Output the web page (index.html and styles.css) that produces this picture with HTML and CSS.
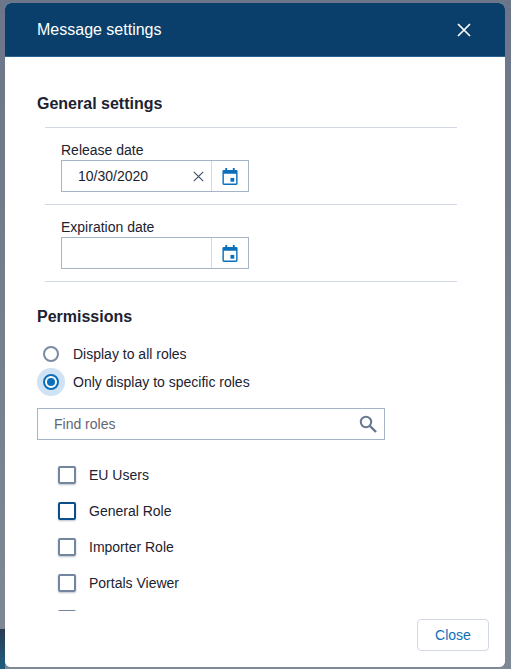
FILE: index.html
```html
<!DOCTYPE html>
<html>

<head>
<title>Message settings</title>
<meta charset="UTF-8">

<link rel="stylesheet" href="styles.css">
</head>

<body>

	<div id="modal">
		<header id="modal-head">
			<h1>Message settings</h1>
			<button class="head-close" aria-label="Close">
				<svg width="14" height="14" viewBox="0 0 14 14"><path d="M1 1L13 13M13 1L1 13" stroke="#fff" stroke-width="1.7" fill="none"/></svg>
			</button>
		</header>

		<div id="modal-body">
			<h2>General settings</h2>
			<div class="fields">
				<div class="field">
					<label>Release date</label>
					<div class="date-input">
						<span class="date-value">10/30/2020</span>
						<svg class="clear" width="11" height="11" viewBox="0 0 11 11"><path d="M.8.8L10.2 10.2M10.2.8L.8 10.2" stroke="#44546a" stroke-width="1.2" fill="none"/></svg>
						<span class="date-btn">
							<svg width="16" height="17" viewBox="0 0 16 18"><path fill="#0b6fbc" d="M3 0h2v2h6V0h2v2h1.500A1.500 1.500 0 0 1 16 3.500v13a1.500 1.500 0 0 1-1.500 1.500h-13A1.500 1.500 0 0 1 0 16.500v-13A1.500 1.500 0 0 1 1.500 2H3zM1.500 6v10.500h13V6z"/><rect x="8.500" y="10.500" width="4" height="4" fill="#0b6fbc"/></svg>
						</span>
					</div>
				</div>
				<div class="field">
					<label>Expiration date</label>
					<div class="date-input">
						<span class="date-value"></span>
						<span class="date-btn">
							<svg width="16" height="17" viewBox="0 0 16 18"><path fill="#0b6fbc" d="M3 0h2v2h6V0h2v2h1.500A1.500 1.500 0 0 1 16 3.500v13a1.500 1.500 0 0 1-1.500 1.500h-13A1.500 1.500 0 0 1 0 16.500v-13A1.500 1.500 0 0 1 1.500 2H3zM1.500 6v10.500h13V6z"/><rect x="8.500" y="10.500" width="4" height="4" fill="#0b6fbc"/></svg>
						</span>
					</div>
				</div>
			</div>

			<h2 class="perm-title">Permissions</h2>
			<div class="radios">
				<div class="radio-row"><span class="radio"></span>Display to all roles</div>
				<div class="radio-row"><span class="radio on"></span>Only display to specific roles</div>
			</div>

			<div class="search">
				<span>Find roles</span>
				<svg width="18" height="18" viewBox="0 0 18 18"><circle cx="7" cy="7" r="5.200" stroke="#68778f" stroke-width="2" fill="none"/><path d="M11 11L17 17" stroke="#68778f" stroke-width="2.400" fill="none"/></svg>
			</div>

			<ul class="roles">
				<li><span class="check"></span>EU Users</li>
				<li><span class="check focus"></span>General Role</li>
				<li><span class="check"></span>Importer Role</li>
				<li><span class="check"></span>Portals Viewer</li>
				<li><span class="check"></span></li>
			</ul>
		</div>

		<footer id="modal-foot">
			<button class="close-btn">Close</button>
		</footer>
	</div>

</body>
</html>
```
FILE: styles.css
```css
* {
	box-sizing: border-box;
}

html, body {
	height: 100%;
}

body {
	margin: 0;
	padding: 3px 6px 2px 5px;
	overflow: hidden;
	background:
		linear-gradient(to top, #1d5f80, #2c3a50) no-repeat 0 100% / 5px 40px,
		linear-gradient(to bottom, #6b7689, #747d8b 40%, #7f8996);
	font: 14px "Liberation Sans", Arial, sans-serif;
	color: #1c2230;
}

#modal {
	height: 664px;
	display: flex;
	flex-direction: column;
	background: #fff;
	border-radius: 6px;
	overflow: hidden;
}

#modal-head {
	height: 54px;
	flex: none;
	display: flex;
	align-items: center;
	justify-content: space-between;
	padding: 0 34px 0 32px;
	background: #0a3f6b;
	border-bottom: 1px solid #2a6390;
}

#modal-head h1 {
	margin: 0;
	font-size: 16px;
	font-weight: normal;
	color: #fff;
}

.head-close {
	display: flex;
	padding: 0;
	margin-top: 1px;
	border: 0;
	background: none;
}

#modal-body {
	flex: 1;
	min-height: 0;
	overflow: hidden;
	padding: 38px 48px 0 32px;
}

h2 {
	margin: 0;
	font-size: 16px;
	line-height: 18px;
	font-weight: bold;
}

.fields {
	margin: 14px 0 0 8px;
	border-top: 1px solid #d3d9e4;
}

.field {
	height: 77px;
	padding: 13px 0 0 16px;
	border-bottom: 1px solid #d3d9e4;
}

.field label {
	display: block;
	line-height: 18px;
	margin-bottom: 1px;
}

.date-input {
	display: flex;
	align-items: center;
	width: 188px;
	height: 32px;
	border: 1px solid #a6b4c7;
}

.date-value {
	flex: 1;
	padding-left: 16px;
}

.clear {
	margin-right: 7px;
}

.date-btn {
	width: 37px;
	height: 100%;
	display: flex;
	align-items: center;
	justify-content: center;
	border-left: 1px solid #d3d9e4;
}

.perm-title {
	margin-top: 26px;
}

.radios {
	margin-top: 14px;
}

.radio-row {
	display: flex;
	align-items: center;
	height: 28px;
	padding-left: 36px;
	position: relative;
}

.radio {
	position: absolute;
	left: 6px;
	top: 6px;
	width: 16px;
	height: 16px;
	border: 2px solid #7c8aa3;
	border-radius: 50%;
	background: #fff;
}

.radio.on {
	border-color: #0b6fbc;
	box-shadow: 0 0 0 6px #cfe3f5;
}

.radio.on::after {
	content: "";
	display: block;
	width: 8px;
	height: 8px;
	margin: 2px;
	border-radius: 50%;
	background: #0b6fbc;
}

.search {
	display: flex;
	align-items: center;
	justify-content: space-between;
	width: 348px;
	height: 32px;
	margin-top: 12px;
	padding: 0 7px 0 16px;
	border: 1px solid #a6b4c7;
	color: #5f6673;
}

.roles {
	list-style: none;
	margin: 17px 0 0;
	padding: 0 0 0 21px;
}

.roles li {
	display: flex;
	align-items: center;
	height: 36px;
}

.check {
	width: 18px;
	height: 18px;
	margin-right: 13px;
	border: 2px solid #7485a0;
	border-radius: 2px;
	box-shadow: 0 1px 2px rgba(60, 80, 110, .35);
}

.check.focus {
	border-color: #0a4f8a;
}

#modal-foot {
	flex: none;
	height: 56px;
	display: flex;
	justify-content: flex-end;
	padding: 8px 16px 0 0;
	background: #fff;
}

.close-btn {
	width: 72px;
	height: 32px;
	padding: 0;
	border: 1px solid #d3d9e4;
	border-radius: 4px;
	background: #fff;
	font: 14px "Liberation Sans", Arial, sans-serif;
	color: #0b6fbc;
}
```
